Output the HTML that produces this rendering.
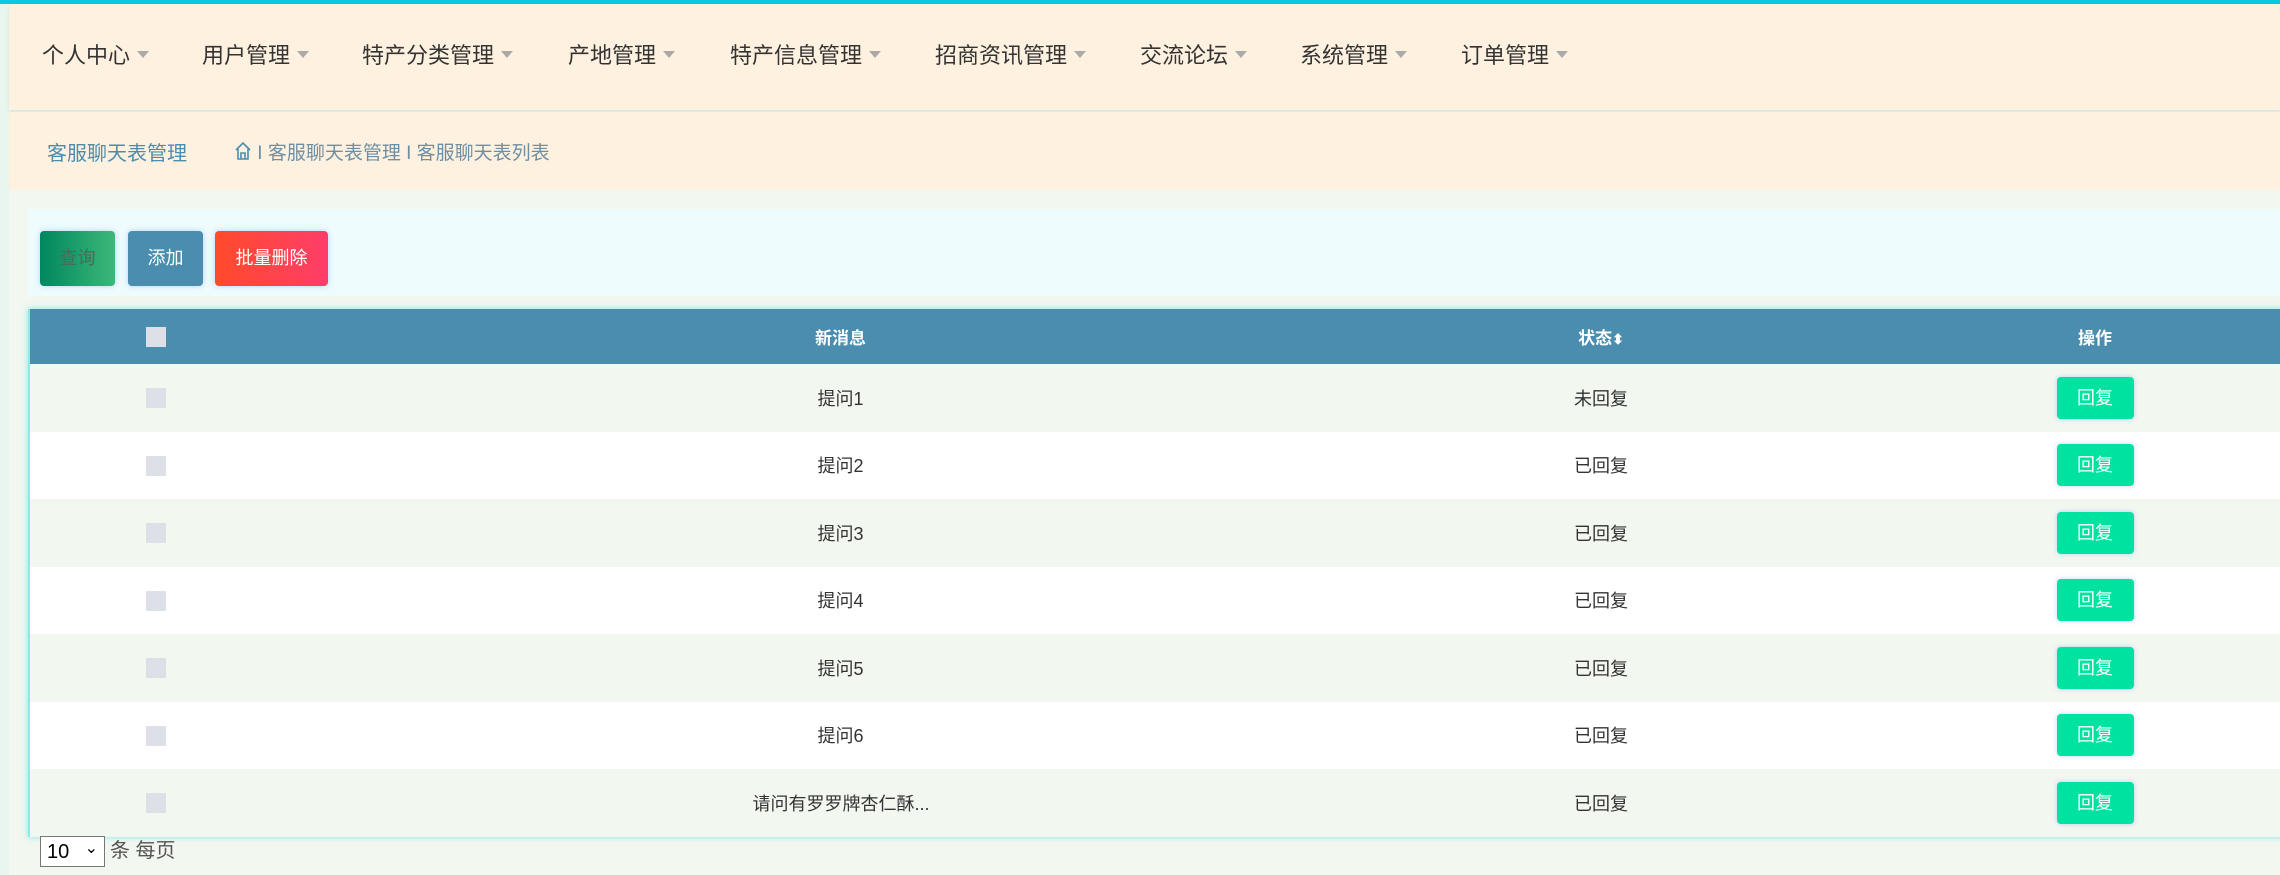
<!DOCTYPE html>
<html><head><meta charset="utf-8"><style>
*{margin:0;padding:0;box-sizing:border-box}
body{width:2280px;height:875px;overflow:hidden;background:#e9f5ef;font-family:"Liberation Sans","Noto Sans CJK SC",sans-serif;position:relative}
.top{position:absolute;left:0;top:0;width:2280px;height:4px;background:#0cc6e2}
.nav{position:absolute;left:9px;top:4px;width:2271px;height:106px;background:#fff1e0;box-shadow:0 2px 4px rgba(0,0,0,.08)}
.nav span{position:absolute;top:38px;font-size:22px;color:#333;line-height:28px;white-space:nowrap}
.nav span:after{content:"";display:inline-block;margin-left:7px;vertical-align:middle;border-left:6px solid transparent;border-right:6px solid transparent;border-top:7px solid #aaa;position:relative;top:-3px}
.bc{position:absolute;left:9px;top:112px;width:2271px;height:78px;background:#fff1e0}
.bc .t{position:absolute;left:38px;top:25px;font-size:20px;color:#4b8dae}
.bc .p{position:absolute;left:225px;top:26px;font-size:19px;color:#6d8fa3;white-space:nowrap}
.main{position:absolute;left:9px;top:190px;width:2271px;height:685px;background:#f2f7f0}
.panel{position:absolute;left:28px;top:209px;width:2252px;height:87px;background:#effcfd}
.btn{position:absolute;top:231px;height:55px;border-radius:4px;color:#fff;font-size:18px;line-height:55px;text-align:center;box-shadow:0 0 6px rgba(120,170,255,.5)}
table{position:absolute;left:28px;top:309px;width:2360px;table-layout:fixed;border-collapse:collapse;box-shadow:0 0 6px #7fe7e5;border-left:2px solid #8fe9e6}
th{background:#4b8dae;color:#fff;height:55px;font-size:17px;font-weight:bold}
td{height:67.5px;text-align:center;font-size:18px;color:#333}
tr:nth-child(even) td{background:#f2f7f0}
tr:nth-child(odd) td{background:#fff}
.cb{display:inline-block;width:20px;height:20px;background:#dde0e6;vertical-align:middle}
.rb{display:inline-block;width:77px;height:42px;line-height:42px;background:#00e3a0;color:#fff;border-radius:4px;font-size:18px;box-shadow:0 0 5px rgba(120,170,255,.5)}
.pg{position:absolute;left:40px;top:836px;font-size:20px;color:#555;line-height:31px}
.sel{display:inline-block;width:65px;height:31px;border:1px solid #777;background:#fff;color:#000;font-size:20px;padding-left:6px;vertical-align:top;position:relative;margin-right:5px}
.sel:after{content:"⌄";position:absolute;right:6px;top:-4px;font-size:16px}
</style></head><body>
<div class="top"></div>
<div class="nav">
<span style="left:33px">个人中心</span>
<span style="left:193px">用户管理</span>
<span style="left:353px">特产分类管理</span>
<span style="left:559px">产地管理</span>
<span style="left:721px">特产信息管理</span>
<span style="left:926px">招商资讯管理</span>
<span style="left:1131px">交流论坛</span>
<span style="left:1291px">系统管理</span>
<span style="left:1452px">订单管理</span>
</div>
<div class="bc"><div class="t">客服聊天表管理</div>
<div class="p"><svg width="18" height="20" viewBox="0 0 18 20" style="vertical-align:-2px"><path d="M2 9 L9 2 L16 9 M4 8 V18 H14 V8 M7 18 V12 H11 V18" fill="none" stroke="#4b8dae" stroke-width="1.6"/></svg> I 客服聊天表管理 I 客服聊天表列表</div></div>
<div class="main"></div>
<div class="panel"></div>
<div class="btn" style="left:40px;width:75px;background:linear-gradient(90deg,#00875f,#3cb878);color:#4a6a5a">查询</div>
<div class="btn" style="left:128px;width:75px;background:#4b8dae">添加</div>
<div class="btn" style="left:215px;width:113px;background:linear-gradient(90deg,#ff4a2a,#ff3d6a)">批量删除</div>
<table>
<colgroup><col style="width:252px"><col style="width:1120px"><col style="width:400px"><col style="width:588px"></colgroup>
<tr><th><span class="cb"></span></th><th>新消息</th><th>状态<span style="font-size:14px">⬍</span></th><th>操作</th></tr>
<tr><td><span class="cb"></span></td><td>提问1</td><td>未回复</td><td><span class="rb">回复</span></td></tr>
<tr><td><span class="cb"></span></td><td>提问2</td><td>已回复</td><td><span class="rb">回复</span></td></tr>
<tr><td><span class="cb"></span></td><td>提问3</td><td>已回复</td><td><span class="rb">回复</span></td></tr>
<tr><td><span class="cb"></span></td><td>提问4</td><td>已回复</td><td><span class="rb">回复</span></td></tr>
<tr><td><span class="cb"></span></td><td>提问5</td><td>已回复</td><td><span class="rb">回复</span></td></tr>
<tr><td><span class="cb"></span></td><td>提问6</td><td>已回复</td><td><span class="rb">回复</span></td></tr>
<tr><td><span class="cb"></span></td><td>请问有罗罗牌杏仁酥...</td><td>已回复</td><td><span class="rb">回复</span></td></tr>
</table>
<div class="pg"><span class="sel">10</span>条 每页</div>
</body></html>
